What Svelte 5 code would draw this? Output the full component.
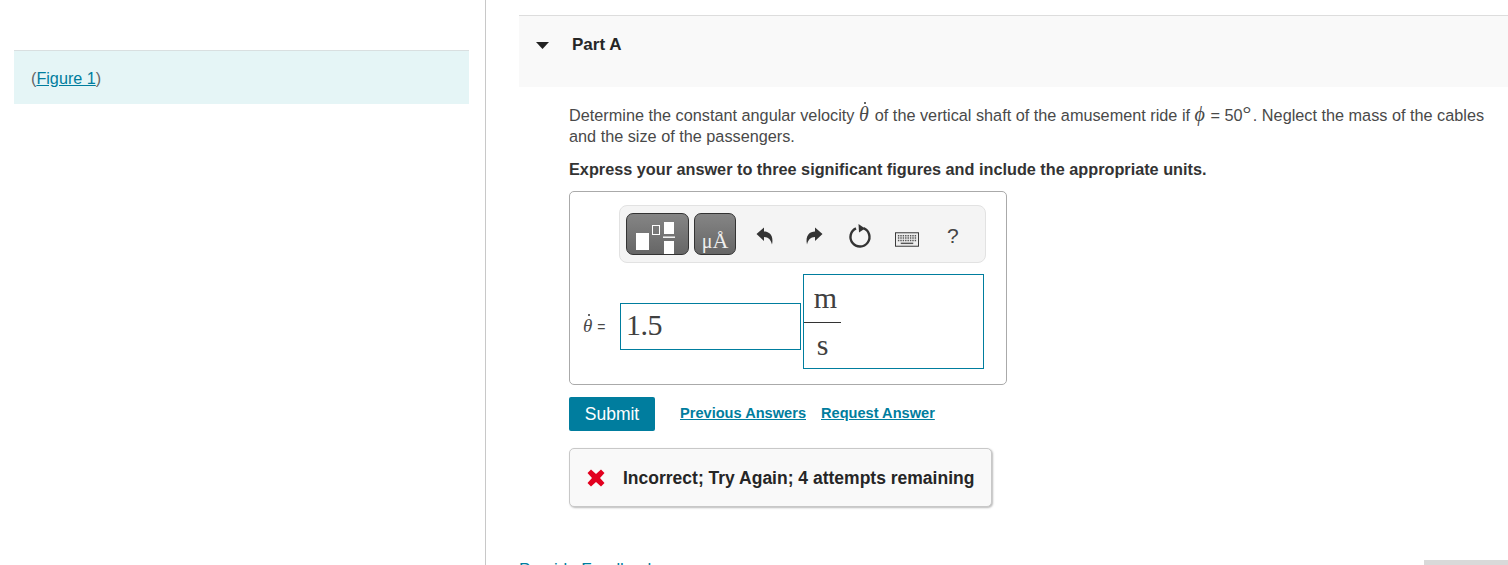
<script>
    let answer = "1.5";
    const attempts = 4;
</script>

<div class="page">
    <aside class="left">
        <div class="figure-box">(<a href="#fig">Figure 1</a>)</div>
    </aside>

    <main class="right">
        <header class="part-head">
            <svg class="caret" width="13" height="7" viewBox="0 0 13 7"><path d="M0 0H13L6.500 7Z" fill="#222"/></svg>
            <h2>Part A</h2>
        </header>

        <section class="body">
            <p class="question">Determine the constant angular velocity <span class="math"><i>θ</i><b class="dot"></b></span> of the vertical shaft of the amusement ride if <i class="phi">ϕ</i> = 50<span class="deg">°</span>. Neglect the mass of the cables and the size of the passengers.</p>
            <p class="instruct">Express your answer to three significant figures and include the appropriate units.</p>

            <div class="answer-box">
                <div class="toolbar">
                    <button class="tool-btn templates" aria-label="templates">
                        <svg width="61" height="40" viewBox="0 0 61 40">
                            <rect x="9" y="19" width="13" height="17" fill="#fff"/>
                            <rect x="25.500" y="11.500" width="7" height="9" fill="none" stroke="#fff" stroke-width="1"/>
                            <rect x="37" y="8" width="10" height="12" fill="#fff"/>
                            <rect x="36" y="22.500" width="12" height="1.400" fill="#fff"/>
                            <rect x="37" y="27" width="10" height="13" fill="#fff"/>
                        </svg>
                    </button>
                    <button class="tool-btn units">
                        <span class="mu">μ</span><span class="ang">Å</span>
                    </button>
                    <div class="icons">
                        <svg width="18" height="18" viewBox="0 0 18 18"><path d="M0.500 7L8 0.500V4.500C13 4.500 18 8 16 17.500C15 13 12.500 10 8 10V14Z" fill="#333"/></svg>
                        <svg width="18" height="18" viewBox="0 0 18 18"><path d="M17.500 7L10 0.500V4.500C5 4.500 0 8 2 17.500C3 13 5.500 10 10 10V14Z" fill="#333"/></svg>
                        <svg width="24" height="24" viewBox="0 0 24 24"><path d="M8 4.400A9.500 9.500 0 1 0 15.500 4.200" fill="none" stroke="#333" stroke-width="2.400"/><path d="M10.500 0L17 4.500L11 8.500Z" fill="#333"/></svg>
                        <svg class="kbd" width="24" height="15" viewBox="0 0 25 15">
                            <rect x="0.500" y="0.500" width="24" height="14" fill="#eee" stroke="#333"/>
                            <path d="M3 3.500H22M3 6H22M3 8.500H22" stroke="#555" stroke-width="1.500" stroke-dasharray="1.500 1"/>
                            <path d="M6 11.500H19" stroke="#555" stroke-width="1.500"/>
                        </svg>
                        <span class="help">?</span>
                    </div>
                </div>

                <div class="equation">
                    <span class="lhs"><span class="math small"><i>θ</i><b class="dot"></b></span><span class="eq">=</span></span>
                    <div class="input value">{answer}</div>
                    <div class="input unit">
                        <div class="frac">
                            <span class="num">m</span>
                            <span class="den">s</span>
                        </div>
                    </div>
                </div>
            </div>

            <div class="actions">
                <button class="submit">Submit</button>
                <a href="#prev">Previous Answers</a>
                <a href="#req">Request Answer</a>
            </div>

            <div class="feedback">
                <svg width="18" height="18" viewBox="0 0 18 18"><path d="M4 0.500L9 5L14 0.500L17.500 4L13 9L17.500 14L14 17.500L9 13L4 17.500L0.500 14L5 9L0.500 4Z" fill="#e2001f"/></svg>
                <span>Incorrect; Try Again; {attempts} attempts remaining</span>
            </div>
        </section>

        <div class="foot">
            <a href="#fb">Provide Feedback</a>
            <div class="next"></div>
        </div>
    </main>
</div>

<style>
    :global(body) {
        margin: 0;
        background: #fff;
        overflow: hidden;
    }

    .page {
        display: flex;
        height: 565px;
        overflow: hidden;
        font-family: "Liberation Sans", Arial, sans-serif;
        font-size: 16px;
        color: #494949;
    }

    a {
        color: #007d9e;
        text-decoration: underline;
    }

    .left {
        width: 486px;
        flex: none;
        box-sizing: border-box;
        border-right: 1px solid #c8c8c8;
        padding: 50px 16px 0 14px;
    }

    .figure-box {
        height: 54px;
        box-sizing: border-box;
        background: #e5f5f6;
        border-top: 1px solid #d9dfe0;
        padding: 18px 17px 0;
        font-size: 16.200px;
        line-height: 18px;
        color: #666;
    }

    .right {
        flex: 1;
        min-width: 0;
        padding: 15px 0 0 33px;
        display: flex;
        flex-direction: column;
    }

    .part-head {
        flex: none;
        height: 72px;
        box-sizing: border-box;
        background: #f9f9f9;
        border-top: 1px solid #ddd;
        display: flex;
        align-items: flex-start;
        padding: 20px 0 0 17px;
    }

    .caret {
        margin: 6px 23px 0 0;
    }

    h2 {
        margin: 0;
        font-size: 17px;
        line-height: 18px;
        font-weight: bold;
        color: #262626;
    }

    .body {
        flex: none;
        padding: 18px 20px 0 50px;
    }

    .question {
        margin: 0;
        font-size: 16.250px;
        line-height: 21px;
    }

    .math {
        position: relative;
        margin-right: 1.500px;
        font-family: "Liberation Serif", serif;
        font-size: 20px;
        line-height: 0;
    }

    .math.small {
        margin-right: 0;
        font-size: 19px;
    }

    .phi {
        margin-right: 1px;
        font-family: "Liberation Serif", serif;
        font-size: 20px;
        line-height: 0;
    }

    .deg {
        margin-right: 1.500px;
        font-family: "Liberation Serif", serif;
        font-size: 22px;
        line-height: 0;
    }

    .dot {
        position: absolute;
        left: 5px;
        top: -1px;
        width: 2px;
        height: 2px;
        border-radius: 50%;
        background: #333;
    }

    .instruct {
        margin: 12px 0 0;
        font-size: 16.260px;
        font-weight: bold;
        line-height: 21px;
        color: #333;
    }

    .answer-box {
        margin-top: 11px;
        width: 438px;
        height: 194px;
        box-sizing: border-box;
        border: 1px solid #aaa;
        border-radius: 5px;
        padding: 13px 0 0 49px;
    }

    .toolbar {
        width: 367px;
        height: 58px;
        box-sizing: border-box;
        background: #f4f4f4;
        border: 1px solid #e2e2e2;
        border-radius: 8px;
        display: flex;
        align-items: center;
        padding: 0 6px;
        gap: 5px;
    }

    .tool-btn {
        height: 42px;
        padding: 0;
        border: 1px solid #333;
        border-radius: 7px;
        background: linear-gradient(#858585, #666);
        color: #eee;
    }

    .tool-btn svg {
        display: block;
    }

    .templates {
        width: 63px;
    }

    .units {
        width: 42px;
        font-family: "Liberation Serif", serif;
        font-size: 22px;
        line-height: 1;
        padding-top: 14px;
        white-space: nowrap;
    }

    .mu {
        font-size: 20px;
    }

    .icons {
        display: flex;
        align-items: center;
        margin: 4px 0 0 15px;
    }

    .icons svg:nth-child(1) { margin-right: 31px; }
    .icons svg:nth-child(2) { margin-right: 25px; }
    .icons svg:nth-child(3) { margin-right: 23px; }
    .icons svg:nth-child(4) { margin: 6px 28px 0 0; }

    .help {
        font-size: 21px;
        color: #444;
    }

    .equation {
        display: flex;
        align-items: center;
        margin: 11px 0 0 -36px;
    }

    .lhs {
        width: 37px;
        margin-top: 10px;
        white-space: nowrap;
    }

    .eq {
        margin-left: 5px;
        font-size: 14px;
    }

    .input {
        box-sizing: border-box;
        border: 1px solid #007d9e;
        font-family: "Liberation Serif", serif;
        color: #404040;
    }

    .value {
        width: 181px;
        height: 47px;
        margin-top: 10px;
        font-size: 30px;
        letter-spacing: -0.500px;
        line-height: 42px;
        padding-left: 5px;
    }

    .unit {
        width: 181px;
        height: 95px;
        margin-left: 2px;
        font-size: 30px;
    }

    .frac {
        width: 37px;
        display: flex;
        flex-direction: column;
        text-align: center;
    }

    .num {
        height: 47px;
        line-height: 46px;
        padding-left: 6px;
        border-bottom: 1px solid #333;
    }

    .den {
        line-height: 44px;
    }

    .actions {
        margin-top: 12px;
        display: flex;
        align-items: center;
        gap: 15px;
        font-weight: bold;
        font-size: 14.600px;
    }

    .actions a {
        margin-bottom: 2px;
    }

    .submit {
        width: 86px;
        height: 34px;
        margin-right: 10px;
        padding: 0;
        border: 0;
        border-radius: 2px;
        background: #007d9e;
        color: #fff;
        font-family: inherit;
        font-size: 17.500px;
    }

    .feedback {
        margin-top: 17px;
        width: 423px;
        height: 59px;
        box-sizing: border-box;
        background: #f9f9f9;
        border: 1px solid #c8c8c8;
        border-radius: 5px;
        box-shadow: 1px 1px 2px #bbb;
        display: flex;
        align-items: center;
        padding: 1px 0 0 17px;
        gap: 18px;
        font-size: 17.500px;
        font-weight: bold;
        color: #262626;
    }

    .foot {
        position: relative;
        margin-top: 54px;
        font-size: 17px;
        line-height: 18px;
    }

    .next {
        position: absolute;
        right: 0;
        top: -1px;
        width: 84px;
        height: 20px;
        background: #d9d9d9;
    }
</style>
